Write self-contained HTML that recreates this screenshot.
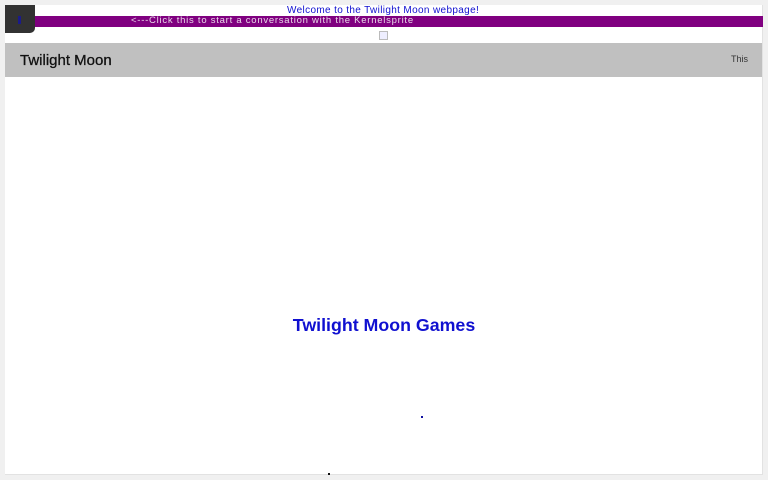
<!DOCTYPE html>
<html><head><meta charset="utf-8"><style>
html,body{margin:0;padding:0;width:768px;height:480px;overflow:hidden;background:#f0f0f0;font-family:"Liberation Sans",sans-serif}
.panel{position:absolute;left:5px;top:5px;width:757px;height:469px;background:#fff;border-right:1px solid #e2e2e2;border-bottom:1px solid #e2e2e2}
.btn{position:absolute;left:5px;top:5px;width:30px;height:28px;background:#323232;border-bottom-right-radius:5px;z-index:3}
.btn i{display:block;position:absolute;left:13px;top:11px;width:3px;height:8px;background:#1a1a8a}
.welcome{position:absolute;left:287px;top:5px;font-size:10px;color:#1010d0;letter-spacing:0.35px;line-height:12px;white-space:nowrap}
.bar{position:absolute;left:35px;top:16px;width:728px;height:11px;background:#800080}
.bar span{position:absolute;left:96px;top:-1px;font-size:9.5px;color:#e8d8e8;line-height:12px;letter-spacing:0.75px;white-space:nowrap}
.img{position:absolute;left:379px;top:31px;width:9px;height:9px;border:1px solid #bbb;box-sizing:border-box;background:#eef}
.head{position:absolute;left:5px;top:43px;width:757px;height:34px;background:#c0c0c0}
.head b{position:absolute;left:15px;top:9px;font-weight:normal;font-size:15px;color:#111;-webkit-text-stroke:0.3px #111}
.head s{position:absolute;right:14px;top:11px;text-decoration:none;font-size:9px;color:#333}
.games{position:absolute;left:0;width:768px;top:315px;text-align:center;font-weight:bold;font-size:17.8px;color:#1010d0}
.dot{position:absolute;background:#1010a0;width:2px;height:2px}
</style></head><body>
<div class="panel"></div>
<div class="btn"><i></i></div>
<div class="welcome">Welcome to the Twilight Moon webpage!</div>
<div class="bar"><span>&lt;---Click this to start a conversation with the Kernelsprite</span></div>
<div class="img"></div>
<div class="head"><b>Twilight Moon</b><s>This</s></div>
<div class="games">Twilight Moon Games</div>
<div class="dot" style="left:421px;top:416px"></div>
<div class="dot" style="left:328px;top:473px;background:#111"></div>
</body></html>
